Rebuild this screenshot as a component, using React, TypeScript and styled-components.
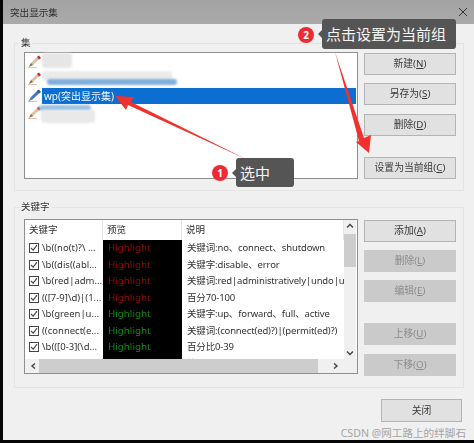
import React from "react";
import styled, { createGlobalStyle } from "styled-components";

const Global = createGlobalStyle`
  html, body { margin: 0; padding: 0; background: #000; }
  * { box-sizing: border-box; }
`;

const FONT = `"Noto Sans", "Noto Sans CJK SC", sans-serif`;

const Screen = styled.div`
  position: relative;
  width: 474px;
  height: 443px;
  overflow: hidden;
  background: #060606;
  padding: 0 0 3px 3px;
  font-family: ${FONT};
`;
const Dialog = styled.div`
  height: 440px;
  display: flex;
  flex-direction: column;
  background: #f0f0f0;
  filter: blur(0.45px);
`;
const TitleBar = styled.div`
  height: 24px;
  flex: none;
  display: flex;
  align-items: center;
  justify-content: space-between;
  padding: 0 6px 0 7px;
  background: linear-gradient(#a3a3a3, #aaaaaa);
  color: #2e2e2e;
  font-size: 9.6px;
`;
const Content = styled.div`
  flex: 1;
  padding: 19px 10px 0 11px;
  display: flex;
  flex-direction: column;
`;
const Group = styled.section<{ $h: number; $pad: number; $mt?: number }>`
  position: relative;
  height: ${(p) => p.$h}px;
  margin-top: ${(p) => p.$mt ?? 0}px;
  border: 1px solid #e4e4e4;
  padding: ${(p) => p.$pad}px 0 0 9px;
  display: flex;
  gap: 6px;
  align-items: flex-start;
`;
const Legend = styled.span`
  position: absolute;
  top: -8px;
  left: 5px;
  padding: 0 1px;
  background: #f0f0f0;
  font-size: 9.5px;
  line-height: 14px;
  color: #333;
`;
const SetList = styled.div`
  width: 334px;
  height: 127px;
  flex: none;
  background: #fff;
  border: 1px solid #8f8f8f;
  padding: 0 1px 0 3px;
  display: flex;
  flex-direction: column;
`;
const SetRow = styled.div`
  position: relative;
  height: 17px;
  flex: none;
  display: flex;
  align-items: center;
`;
const SetName = styled.span<{ $selected?: boolean }>`
  flex: 1;
  height: 16px;
  padding-left: 2px;
  font-size: 10px;
  line-height: 16px;
  color: ${(p) => (p.$selected ? "#f4f8fd" : "#333")};
  background: ${(p) => (p.$selected ? "#0a6fd0" : "transparent")};
`;
const Smudge = styled.i<{ $l: number; $t: number; $w: number; $h: number; $c: string }>`
  position: absolute;
  left: ${(p) => p.$l}px;
  top: ${(p) => p.$t}px;
  width: ${(p) => p.$w}px;
  height: ${(p) => p.$h}px;
  background: ${(p) => p.$c};
  border-radius: 3px;
  filter: blur(1px);
`;
const ButtonColumn = styled.div`
  width: 92px;
  flex: none;
  display: flex;
  flex-direction: column;
  padding-top: 1px;
`;
const Btn = styled.button<{ $mt?: number; $w?: number; $h?: number }>`
  display: block;
  width: ${(p) => p.$w ?? 92}px;
  height: ${(p) => p.$h ?? 22}px;
  margin: ${(p) => p.$mt ?? 0}px 0 0;
  padding: 0;
  border: 1px solid #b4b4b4;
  background: #e1e1e1;
  color: #3a3a3a;
  font-family: ${FONT};
  font-size: 9.8px;
  line-height: 18px;
  white-space: nowrap;
  &:disabled {
    background: #cacaca;
    border-color: #cacaca;
    color: #8c8c8c;
  }
`;
const Table = styled.div`
  position: relative;
  width: 334px;
  height: 155px;
  flex: none;
  background: #fff;
  border: 1px solid #8f8f8f;
  overflow: hidden;
`;
const Grid = styled.div`
  width: 319px;
  height: 140px;
  overflow: hidden;
`;
const Row = styled.div`
  display: grid;
  grid-template-columns: 78px 79px 162px;
  height: 16.5px;
  font-size: 9.5px;
  line-height: 16.5px;
  color: #333;
  white-space: nowrap;
`;
const HeadRow = styled(Row)`
  height: 20px;
  line-height: 20px;
`;
const HeadCell = styled.div`
  padding-left: 4px;
  border-right: 1px solid #e6e6e6;
`;
const KeyCell = styled.div`
  display: flex;
  align-items: center;
  gap: 3px;
  padding-left: 4px;
`;
const Check = styled.span`
  width: 10px;
  height: 10px;
  flex: none;
  border: 1px solid #444;
  background: #fff;
  display: flex;
`;
const Preview = styled.div<{ $c: string }>`
  background: #000;
  color: ${(p) => p.$c};
  padding-left: 5px;
  font-size: 9.8px;
`;
const Desc = styled.div`
  padding-left: 5px;
  letter-spacing: -0.15px;
`;
const VScroll = styled.div`
  position: absolute;
  right: 1px;
  top: 0;
  width: 12px;
  height: 140px;
  background: #f0f0f0;
  display: flex;
  flex-direction: column;
  align-items: center;
  justify-content: space-between;
  padding: 3px 0 4px;
`;
const VThumb = styled.div`
  position: absolute;
  left: 0;
  top: 14px;
  width: 12px;
  height: 33px;
  background: #cdcdcd;
`;
const HScroll = styled.div`
  position: absolute;
  left: 0;
  right: 0;
  bottom: 0;
  height: 14px;
  background: #f0f0f0;
  display: flex;
  align-items: center;
  justify-content: space-between;
  padding: 0 18px 0 5px;
`;
const HThumb = styled.div`
  position: absolute;
  left: 14px;
  top: 0;
  width: 279px;
  height: 14px;
  background: #cdcdcd;
`;
const Footer = styled.div`
  display: flex;
  justify-content: flex-end;
  padding: 11px 2px 0 0;
`;
const Badge = styled.span<{ $x: number; $y: number }>`
  position: absolute;
  left: ${(p) => p.$x - 8}px;
  top: ${(p) => p.$y - 8}px;
  width: 16px;
  height: 16px;
  border-radius: 50%;
  background: #ee2b33;
  color: #fff;
  font-size: 10px;
  font-weight: 700;
  line-height: 16px;
  text-align: center;
`;
const Callout = styled.div<{ $x: number; $y: number; $w: number; $h: number }>`
  position: absolute;
  left: ${(p) => p.$x}px;
  top: ${(p) => p.$y}px;
  width: ${(p) => p.$w}px;
  height: ${(p) => p.$h}px;
  padding-left: 4px;
  background: #555;
  border-radius: 3px;
  color: #f5f5f5;
  font-family: "Noto Sans CJK SC", sans-serif;
  font-size: 15px;
  line-height: ${(p) => p.$h}px;
  white-space: nowrap;
  &::before {
    content: "";
    position: absolute;
    left: -4px;
    top: 50%;
    margin-top: -4px;
    border-style: solid;
    border-width: 4px 4px 4px 0;
    border-color: transparent #555 transparent transparent;
  }
`;
const ArrowLayer = styled.svg`
  position: absolute;
  left: 0;
  top: 0;
  pointer-events: none;
`;
const Watermark = styled.span`
  position: absolute;
  right: 8px;
  top: 427px;
  font-size: 10.6px;
  line-height: 12px;
  color: #a4a4a4;
  white-space: nowrap;
`;

const Pencil = ({ c }: { c: string }) => (
  <svg width="14" height="13" viewBox="0 0 14 13" style={{ flex: "none" }}>
    <path d="M1 12 L3 8 L10 1 L12.5 3 L5 10 Z" fill={c === "blue" ? "#3f79b8" : "#d9c3a6"} />
    <path d="M9 2 L11 0.5 L13 3 L11 4.5 Z" fill={c === "blue" ? "#2b5f9c" : "#d8232a"} />
    <path d="M1 12 L3 8 L5 10 Z" fill={c === "blue" ? "#6d7f96" : "#8a6f5c"} />
    <path d="M0 12.5 H9" stroke={c === "blue" ? "#9dbbdc" : "#e9b08a"} strokeWidth="0.8" />
  </svg>
);

const Tick = () => (
  <svg width="8" height="8" viewBox="0 0 8 8">
    <path d="M1 4 L3.2 6.2 L7 1.2" fill="none" stroke="#444" strokeWidth="1.1" />
  </svg>
);

const Chevron = ({ d }: { d: string }) => (
  <svg width="8" height="6" viewBox="0 0 8 6" style={{ position: "relative" }}>
    <path d={d} fill="none" stroke="#444" strokeWidth="1.4" />
  </svg>
);

const RED = "#8e0c0c";
const GREEN = "#0f8a0f";
const rows: [string, string, string][] = [
  ["\\b((no(t)?\\ ...", RED, "关键词:no、connect、shutdown"],
  ["\\b((dis((abl...", RED, "关键字:disable、error"],
  ["\\b(red|adm...", RED, "关键词:red|administratively|undo|u."],
  ["(([7-9]\\d)|(1...", RED, "百分70-100"],
  ["\\b(green|u...", GREEN, "关键字:up、forward、full、active"],
  ["((connect(e...", GREEN, "关键词:(connect(ed)?)|(permit(ed)?)"],
  ["\\b(([0-3](\\d...", GREEN, "百分比0-39"],
  ["\\b(up|down...", GREEN, "接口状态"],
];

export default function App() {
  return (
    <Screen>
      <Global />
      <Dialog>
        <TitleBar>
          <span>突出显示集</span>
          <svg width="10" height="10" viewBox="0 0 10 10">
            <path d="M1 1 L9 9 M9 1 L1 9" stroke="#333" strokeWidth="1" />
          </svg>
        </TitleBar>
        <Content>
          <Group $h={148} $pad={8}>
            <Legend>集</Legend>
            <SetList>
              <SetRow>
                <Pencil c="red" />
                <SetName />
                <Smudge $l={14} $t={0} $w={30} $h={15} $c="#e6e6e6" />
              </SetRow>
              <SetRow>
                <Pencil c="red" />
                <SetName />
                <Smudge $l={14} $t={1} $w={130} $h={10} $c="#ebebeb" />
                <Smudge $l={19} $t={9} $w={130} $h={6} $c="#7fb0dc" />
              </SetRow>
              <SetRow>
                <Pencil c="blue" />
                <SetName $selected>wp(突出显示集)</SetName>
              </SetRow>
              <SetRow>
                <Pencil c="red" />
                <SetName />
                <Smudge $l={11} $t={1} $w={52} $h={6} $c="#9cc2e4" />
                <Smudge $l={13} $t={6} $w={54} $h={13} $c="#e9e9e9" />
              </SetRow>
            </SetList>
            <ButtonColumn>
              <Btn>
                新建(<u>N</u>)
              </Btn>
              <Btn $mt={8}>
                另存为(<u>S</u>)
              </Btn>
              <Btn $mt={9}>
                删除(<u>D</u>)
              </Btn>
              <Btn $mt={21}>
                设置为当前组(<u>C</u>)
              </Btn>
            </ButtonColumn>
          </Group>
          <Group $h={181} $pad={11} $mt={16}>
            <Legend>关键字</Legend>
            <Table>
              <Grid>
                <HeadRow>
                  <HeadCell>关键字</HeadCell>
                  <HeadCell>预览</HeadCell>
                  <HeadCell>说明</HeadCell>
                </HeadRow>
                {rows.map(([key, color, desc]) => (
                  <Row key={key}>
                    <KeyCell>
                      <Check>
                        <Tick />
                      </Check>
                      {key}
                    </KeyCell>
                    <Preview $c={color}>Highlight</Preview>
                    <Desc>{desc}</Desc>
                  </Row>
                ))}
              </Grid>
              <VScroll>
                <VThumb />
                <Chevron d="M1 4.5 L4 1.5 L7 4.5" />
                <Chevron d="M1 1.5 L4 4.5 L7 1.5" />
              </VScroll>
              <HScroll>
                <HThumb />
                <Chevron d="M5 0.5 L2 3 L5 5.5" />
                <Chevron d="M3 0.5 L6 3 L3 5.5" />
              </HScroll>
            </Table>
            <ButtonColumn>
              <Btn>
                添加(<u>A</u>)
              </Btn>
              <Btn $mt={8} disabled>
                删除(<u>L</u>)
              </Btn>
              <Btn $mt={8} disabled>
                编辑(<u>E</u>)
              </Btn>
              <Btn $mt={21} disabled>
                上移(<u>U</u>)
              </Btn>
              <Btn $mt={9} disabled>
                下移(<u>O</u>)
              </Btn>
            </ButtonColumn>
          </Group>
          <Footer>
            <Btn $w={81} $h={23}>
              关闭
            </Btn>
          </Footer>
        </Content>
      </Dialog>
      <ArrowLayer width="474" height="443" viewBox="0 0 474 443">
        <polygon
          points="115,96 134,97 131,102 248,160 128,105 126,110"
          fill="#f0322f"
        />
        <polygon
          points="369,153 371,135 364,138 335,52 359,141 356,142"
          fill="#f0322f"
        />
      </ArrowLayer>
      <Badge $x={220} $y={173}>1</Badge>
      <Callout $x={236} $y={158} $w={58} $h={29}>选中</Callout>
      <Badge $x={306} $y={35}>2</Badge>
      <Callout $x={322} $y={19} $w={134} $h={30}>点击设置为当前组</Callout>
      <Watermark>CSDN @网工路上的绊脚石</Watermark>
    </Screen>
  );
}
